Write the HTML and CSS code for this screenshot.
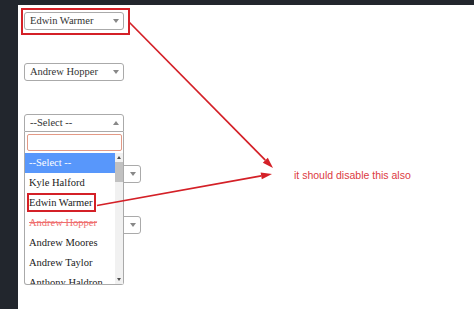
FILE: index.html
```html
<!DOCTYPE html>
<html>
<head>
<meta charset="utf-8">
<link rel="stylesheet" href="styles.css">
</head>
<body>
<div class="topbar"></div>
<div class="layout">
  <aside class="sidebar"></aside>
  <main class="main">
    <div class="mark-box">
      <div class="sel w100"><span class="sel-text">Edwin Warmer</span><span class="caret"></span></div>
    </div>
    <div class="sel w100"><span class="sel-text">Andrew Hopper</span><span class="caret"></span></div>
    <div class="sel-wrap">
      <div class="sel w100 open"><span class="sel-text">--Select --</span><span class="caret up"></span></div>
      <div class="dropdown">
        <div class="search"><div class="search-input"></div></div>
        <div class="results">
          <ul class="options">
            <li class="opt active">--Select --</li>
            <li class="opt">Kyle Halford</li>
            <li class="opt"><span class="mark-item">Edwin Warmer</span></li>
            <li class="opt disabled">Andrew Hopper</li>
            <li class="opt">Andrew Moores</li>
            <li class="opt">Andrew Taylor</li>
            <li class="opt">Anthony Haldron</li>
          </ul>
          <div class="scrollbar">
            <span class="sb-arrow up"></span>
            <span class="sb-thumb"></span>
            <span class="sb-space"></span>
            <span class="sb-arrow down"></span>
          </div>
        </div>
      </div>
    </div>
    <div class="sel w117 end"><span class="caret"></span></div>
    <div class="sel w117 end"><span class="caret"></span></div>
  </main>
</div>
<svg class="annot" width="474" height="309" viewBox="0 0 474 309">
  <line x1="129" y1="22" x2="265.3" y2="160.2" stroke="#d42027" stroke-width="1.7"/>
  <polygon points="273,168 262.8,162.7 267.8,157.7" fill="#d42027"/>
  <line x1="97" y1="205.5" x2="261.2" y2="175.9" stroke="#d42027" stroke-width="1.7"/>
  <polygon points="272,174 261.8,179.3 260.6,172.4" fill="#d42027"/>
</svg>
<div class="note">it should disable this also</div>
</body>
</html>
```

FILE: styles.css
```css
html, body {
  margin: 0;
  padding: 0;
  background: #ffffff;
  width: 474px;
  height: 309px;
  overflow: hidden;
  position: relative;
}

.topbar {
  height: 5px;
  background: #22262d;
}

.layout {
  display: flex;
  height: 304px;
}

.sidebar {
  width: 18px;
  flex: none;
  background: #22262d;
}

.main {
  flex: 1;
  display: flex;
  flex-direction: column;
  align-items: flex-start;
  gap: 33px;
  padding: 7px 0 0 6px;
  font-family: "Liberation Serif", "Times New Roman", serif;
  font-size: 10.5px;
  color: #333;
}

.mark-box {
  border: 2px solid #d42027;
  padding: 2px 4px 3px 1px;
  margin: -4px 0 -5px -3px;
}

.sel {
  box-sizing: border-box;
  height: 18px;
  border: 1px solid #aaaaaa;
  border-radius: 3px;
  background: #fff;
  display: flex;
  align-items: center;
  justify-content: space-between;
  padding: 0 4px 0 5px;
}

.sel.end {
  justify-content: flex-end;
}

.w100 { width: 100px; }
.w117 { width: 117px; }

.sel-text {
  line-height: 16px;
  white-space: nowrap;
  color: #333;
}

.caret {
  width: 0;
  height: 0;
  border-left: 3px solid transparent;
  border-right: 3px solid transparent;
  border-top: 4px solid #888;
}

.caret.up {
  border-top: none;
  border-bottom: 4px solid #888;
}

.sel.open {
  border-radius: 3px 3px 0 0;
}

.sel-wrap {
  position: relative;
  z-index: 2;
}

.dropdown {
  position: absolute;
  top: 100%;
  left: 0;
  width: 100px;
  box-sizing: border-box;
  border: 1px solid #aaaaaa;
  border-top: none;
  border-radius: 0 0 3px 3px;
  background: #fff;
}

.search {
  padding: 2px 1px 2px 2px;
}

.search-input {
  height: 17px;
  box-sizing: border-box;
  border: 1px solid #e39a86;
  border-radius: 2px;
}

.results {
  display: flex;
  height: 131px;
  overflow: hidden;
}

.options {
  flex: 1;
  list-style: none;
  margin: 0;
  padding: 0;
}

.opt {
  height: 20px;
  line-height: 20px;
  padding-left: 4px;
  color: #1a1a1a;
  white-space: nowrap;
}

.opt.active {
  background: #5897fb;
  color: #ffffff;
}

.opt.disabled {
  color: #ef6f6f;
  text-decoration: line-through;
}

.mark-item {
  display: inline-block;
  vertical-align: top;
  line-height: 15px;
  border: 2px solid #d42027;
  margin-left: -2px;
  padding: 0 2px 0 0;
}

.scrollbar {
  width: 8px;
  flex: none;
  background: #f1f1f1;
  display: flex;
  flex-direction: column;
  align-items: center;
}

.sb-arrow {
  width: 0;
  height: 0;
  border-left: 2.5px solid transparent;
  border-right: 2.5px solid transparent;
  margin: 3px 0;
}

.sb-arrow.up {
  border-bottom: 3px solid #505050;
}

.sb-arrow.down {
  border-top: 3px solid #505050;
}

.sb-thumb {
  width: 8px;
  height: 20px;
  background: #c1c1c1;
}

.sb-space {
  flex: 1;
}

.annot {
  position: absolute;
  top: 0;
  left: 0;
  z-index: 5;
  pointer-events: none;
}

.note {
  position: absolute;
  left: 294px;
  top: 169px;
  font-family: "Liberation Sans", Arial, sans-serif;
  font-size: 10.5px;
  line-height: 12px;
  color: #dc3a3f;
  white-space: nowrap;
  z-index: 5;
}
```
